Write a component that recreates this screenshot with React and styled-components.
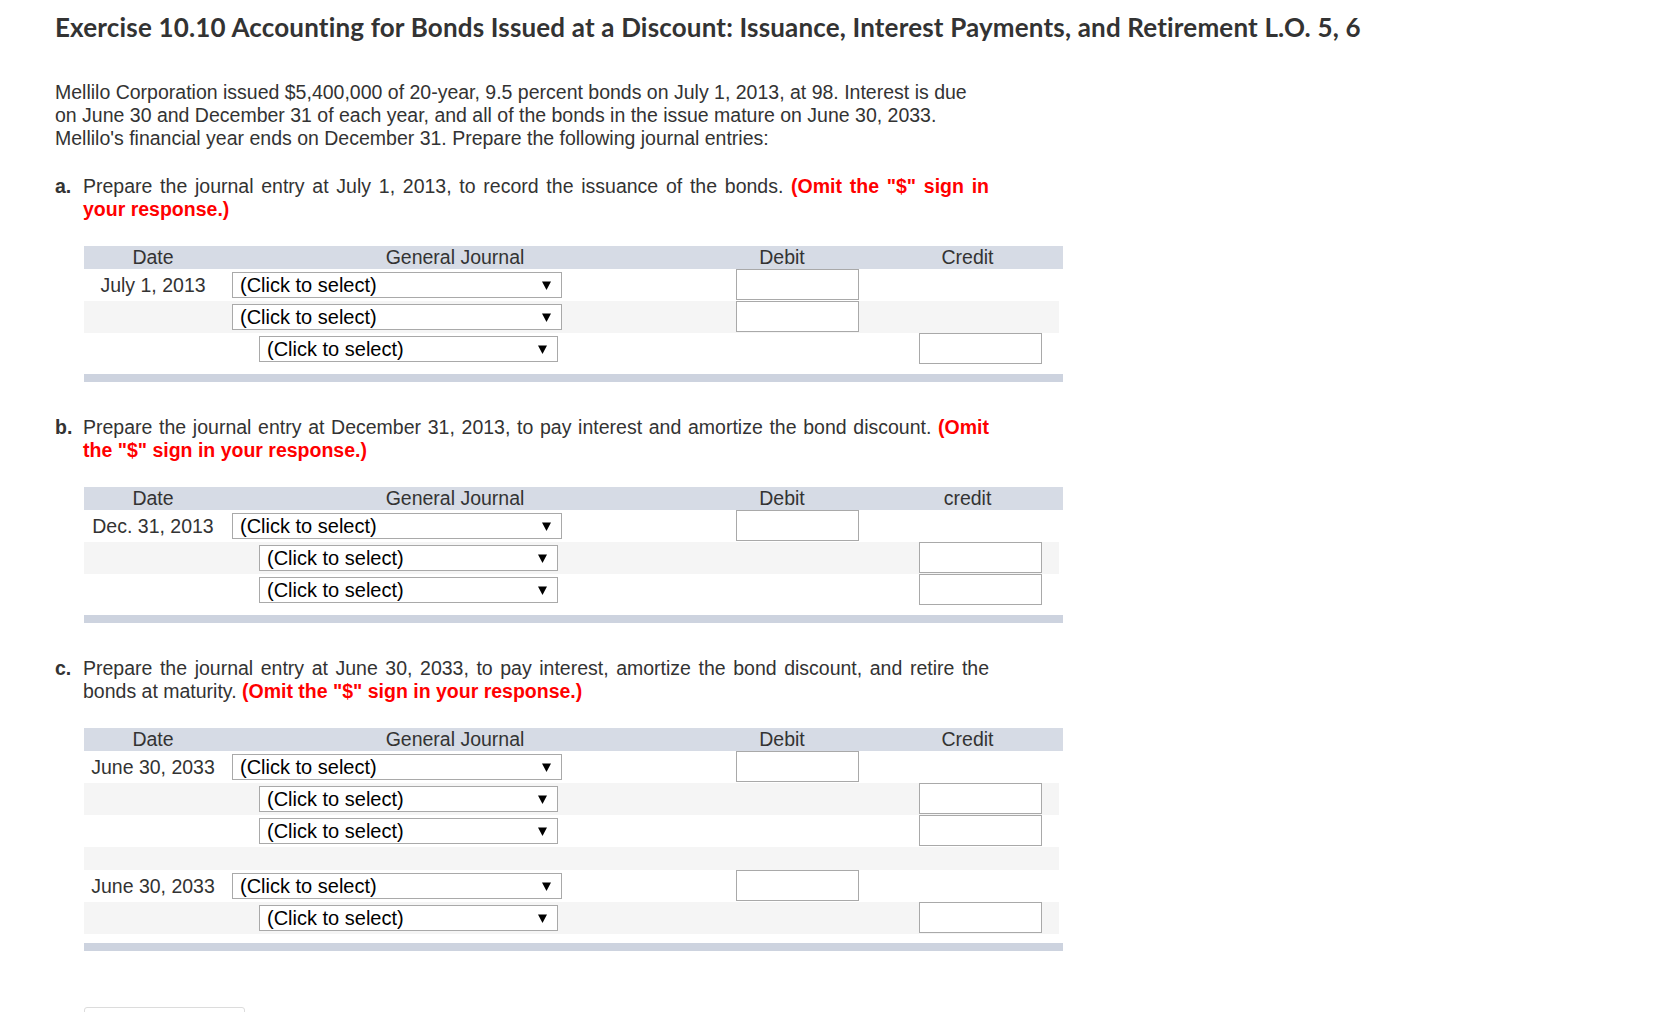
import React from "react"
import styled, { createGlobalStyle } from "styled-components"

const GlobalStyle = createGlobalStyle`
  body {
    margin: 0;
    background: #fff;
    font-family: "Liberation Sans", Arial, sans-serif;
    color: #333;
  }
`

const Page = styled.div`
  padding: 11px 0 40px 55px;
  width: 1100px;
`

const Title = styled.h1`
  margin: 0;
  font-family: Lato, "Open Sans", sans-serif;
  font-weight: 700;
  font-size: 26px;
  line-height: 32px;
  letter-spacing: 0.17px;
  color: #333;
  white-space: nowrap;
`

const Intro = styled.p`
  margin: 38px 0 0;
  font-size: 19.5px;
  line-height: 23px;
`

const Question = styled.div`
  display: grid;
  grid-template-columns: 28px 906px;
  margin-top: ${(props) => props.$top}px;
  font-size: 19.5px;
  line-height: 23px;
`

const Label = styled.span`
  font-weight: bold;
`

const Line = styled.div`
  text-align: ${(props) => (props.$justify ? "justify" : "left")};
  text-align-last: ${(props) => (props.$justify ? "justify" : "auto")};
`

const Red = styled.span`
  color: #f00;
  font-weight: bold;
`

const Table = styled.div`
  margin: 25px 0 0 29px;
  width: 979px;
`

const HeaderRow = styled.div`
  display: grid;
  grid-template-columns: 138px 466px 188px 183px;
  height: 23px;
  background: #d6dbe5;
  font-size: 19.5px;
  line-height: 23px;
  text-align: center;
  color: #333;
`

const Row = styled.div`
  display: grid;
  grid-template-columns: 138px 466px 188px 183px;
  width: 975px;
  height: ${(props) => props.$h}px;
  background: ${(props) => (props.$shade ? "#f5f5f5" : "#fff")};
`

const DateCell = styled.div`
  align-self: center;
  text-align: center;
  font-size: 19.5px;
  line-height: 23px;
  color: #333;
`

const Cell = styled.div`
  display: flex;
  align-items: center;
`

const AmountCell = styled.div`
  display: flex;
  justify-content: flex-end;
  align-items: flex-start;
  padding-right: 17px;
`

const SelectBox = styled.div`
  box-sizing: border-box;
  display: flex;
  align-items: center;
  justify-content: space-between;
  margin-left: ${(props) => (props.$indent ? 37 : 10)}px;
  width: ${(props) => (props.$indent ? 299 : 330)}px;
  height: 26px;
  padding: 0 10px 0 7px;
  border: 1px solid #a9a9a9;
  background: #fff;
  font-size: 20px;
  color: #000;
  cursor: pointer;
`

const AmountInput = styled.input`
  box-sizing: border-box;
  width: 123px;
  height: 31px;
  margin: 0;
  border: 1px solid #a9a9a9;
  background: #fff;
  font-family: inherit;
  font-size: 18px;
  padding: 0 4px;
`

const Bar = styled.div`
  margin-top: 9px;
  height: 8px;
  background: #cdd3df;
`

const BottomButton = styled.div`
  margin: 56px 0 0 29px;
  width: 159px;
  height: 36px;
  border: 1px solid #dcdcdc;
  border-radius: 3px;
`

const Arrow = () => (
  <svg width="9" height="9" viewBox="0 0 9 9">
    <polygon points="0,0.5 9,0.5 4.5,9" fill="#000" />
  </svg>
)

const tables = [
  {
    credit: "Credit",
    rows: [
      { date: "July 1, 2013", debit: true },
      { debit: true },
      { indent: true, credit: true },
    ],
  },
  {
    credit: "credit",
    rows: [
      { date: "Dec. 31, 2013", debit: true },
      { indent: true, credit: true },
      { indent: true, credit: true },
    ],
  },
  {
    credit: "Credit",
    rows: [
      { date: "June 30, 2033", debit: true },
      { indent: true, credit: true },
      { indent: true, credit: true },
      { spacer: true },
      { date: "June 30, 2033", debit: true },
      { indent: true, credit: true },
    ],
  },
]

const Journal = ({ table }) => (
  <Table>
    <HeaderRow>
      <div>Date</div>
      <div>General Journal</div>
      <div>Debit</div>
      <div>{table.credit}</div>
    </HeaderRow>
    {table.rows.map((row, i) =>
      row.spacer ? (
        <Row key={i} $h={23} $shade={i % 2 === 1} />
      ) : (
        <Row key={i} $h={32} $shade={i % 2 === 1}>
          <DateCell>{row.date}</DateCell>
          <Cell>
            <SelectBox $indent={row.indent}>
              <span>(Click to select)</span>
              <Arrow />
            </SelectBox>
          </Cell>
          <AmountCell>{row.debit && <AmountInput type="text" />}</AmountCell>
          <AmountCell>{row.credit && <AmountInput type="text" />}</AmountCell>
        </Row>
      )
    )}
    <Bar />
  </Table>
)

const App = () => {
  return (
    <>
      <GlobalStyle />
      <Page>
        <Title>
          Exercise 10.10 Accounting for Bonds Issued at a Discount: Issuance, Interest Payments, and Retirement L.O. 5, 6
        </Title>
        <Intro>
          Mellilo Corporation issued $5,400,000 of 20-year, 9.5 percent bonds on July 1, 2013, at 98. Interest is due
          <br />
          on June 30 and December 31 of each year, and all of the bonds in the issue mature on June 30, 2033.
          <br />
          Mellilo's financial year ends on December 31. Prepare the following journal entries:
        </Intro>

        <Question $top={25}>
          <Label>a.</Label>
          <div>
            <Line $justify>
              Prepare the journal entry at July 1, 2013, to record the issuance of the bonds. <Red>(Omit the "$" sign in</Red>
            </Line>
            <Line>
              <Red>your response.)</Red>
            </Line>
          </div>
        </Question>
        <Journal table={tables[0]} />

        <Question $top={34}>
          <Label>b.</Label>
          <div>
            <Line $justify>
              Prepare the journal entry at December 31, 2013, to pay interest and amortize the bond discount. <Red>(Omit</Red>
            </Line>
            <Line>
              <Red>the "$" sign in your response.)</Red>
            </Line>
          </div>
        </Question>
        <Journal table={tables[1]} />

        <Question $top={34}>
          <Label>c.</Label>
          <div>
            <Line $justify>
              Prepare the journal entry at June 30, 2033, to pay interest, amortize the bond discount, and retire the
            </Line>
            <Line>
              bonds at maturity. <Red>(Omit the "$" sign in your response.)</Red>
            </Line>
          </div>
        </Question>
        <Journal table={tables[2]} />

        <BottomButton />
      </Page>
    </>
  )
}

export default App
